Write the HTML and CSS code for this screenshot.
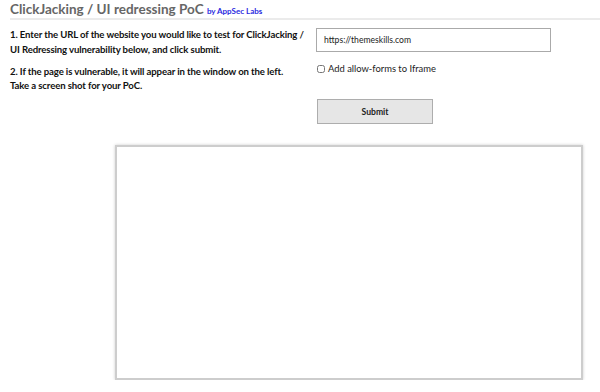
FILE: index.html
```html
<!DOCTYPE html>
<html lang="en">
<head>
    <meta charset="UTF-8">
    <title>ClickJacking / UI redressing PoC</title>
    <link rel="stylesheet" href="styles.css">
</head>
<body>
<div id="page">

    <!--标题-->
    <h1 class="title">ClickJacking / UI redressing PoC <span class="by">by AppSec Labs</span></h1>

    <!--说明和表单-->
    <div class="main">
        <div class="steps">
            <p>1. Enter the URL of the website you would like to test for ClickJacking / UI Redressing vulnerability below, and click submit.</p>
            <p>2. If the page is vulnerable, it will appear in the window on the left.<br>Take a screen shot for your PoC.</p>
        </div>
        <div class="form">
            <input class="url" type="text" value="https://themeskills.com">
            <label class="check"><input type="checkbox"><span>Add allow-forms to Iframe</span></label>
            <button class="submit" type="button">Submit</button>
        </div>
    </div>

    <!--iframe窗口-->
    <div class="frame"></div>
</div>
</body>
</html>
```

FILE: styles.css
```css
*{
    margin: 0;
    padding: 0;
    box-sizing: border-box;
}
body{
    background: #fff;
    font-family: Lato, "Open Sans", sans-serif;
    color: #111;
}
#page{
    padding-top: 1px;
}
#page .title{
    margin-left: 10px;
    height: 19px;
    border-bottom: 2px solid #ebebeb;
    font-size: 13.5px;
    line-height: 16px;
    font-weight: bold;
    color: #666;
    white-space: nowrap;
}
#page .title .by{
    font-size: 8px;
    color: #2a2ae0;
}
#page .main{
    display: flex;
    margin-top: 8px;
}
#page .steps{
    flex-shrink: 0;
    width: 316px;
    padding: 0 8px 0 10px;
}
#page .steps p{
    font-size: 9.6px;
    line-height: 14.5px;
    font-weight: bold;
    letter-spacing: -0.12px;
    margin-bottom: 7.5px;
}
#page .form{
    display: flex;
    flex-direction: column;
    align-items: flex-start;
}
#page .url{
    width: 235px;
    height: 24px;
    border: 1px solid #aaa;
    padding: 0 7px;
    font-family: Lato, sans-serif;
    font-size: 8.6px;
    color: #222;
}
#page .check{
    display: flex;
    align-items: center;
    margin-top: 11px;
    font-size: 9.4px;
    color: #222;
}
#page .check input{
    width: 8px;
    height: 8px;
    margin: 0 3px 0 1px;
}
#page .submit{
    width: 116px;
    height: 25px;
    margin-top: 25px;
    margin-left: 1px;
    background: #e6e6e6;
    border: 1px solid #adadad;
    font-family: Lato, sans-serif;
    font-size: 8.6px;
    font-weight: bold;
    color: #222;
}
#page .frame{
    width: 468px;
    height: 235px;
    margin: 21px 0 0 115px;
    border: 2px solid #cdcdcd;
    box-shadow: 0 0 3px rgba(0,0,0,0.2);
    background: #fff;
}
```
